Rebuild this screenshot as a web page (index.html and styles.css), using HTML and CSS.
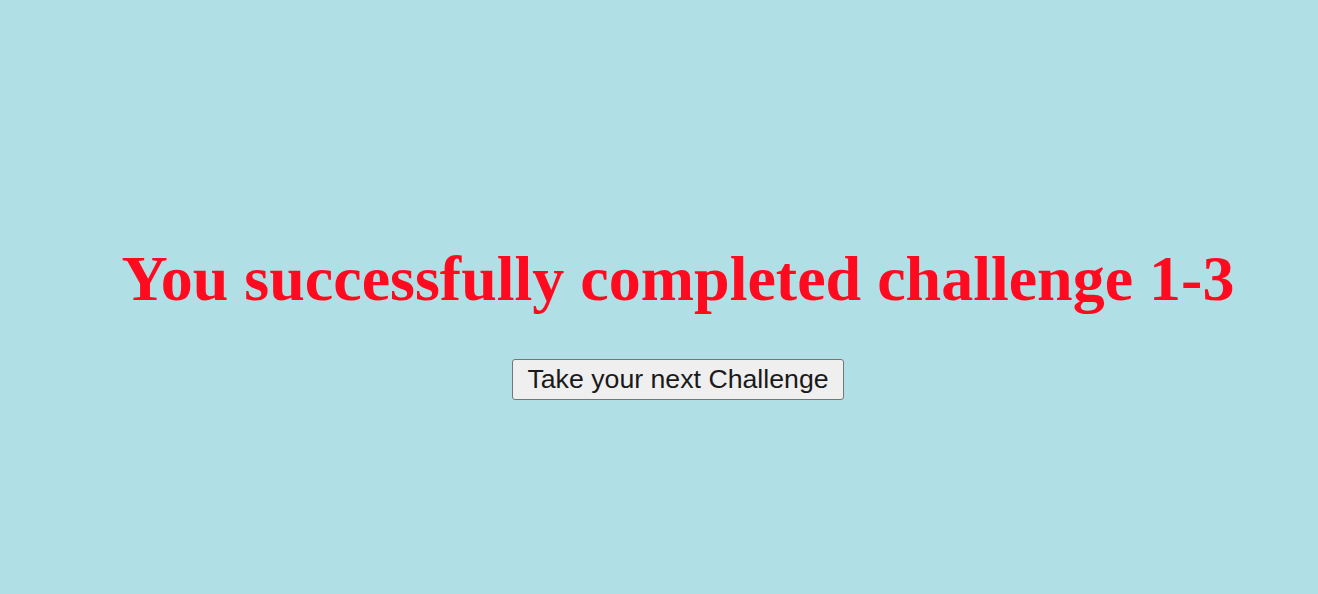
FILE: index.html
```html
<!DOCTYPE html>
<html>
<head>
<meta charset="utf-8">
<link rel="stylesheet" href="styles.css">
</head>
<body>
<main class="page">
  <h1 class="title">You successfully completed challenge 1-3</h1>
  <button class="next-btn">Take your next Challenge</button>
</main>
</body>
</html>
```
FILE: styles.css
```css
html, body {
  margin: 0;
  height: 100%;
  background: #b0e0e6;
}
.page {
  display: flex;
  flex-direction: column;
  align-items: center;
  padding-top: 236px;
  padding-left: 38px;
}
.title {
  margin: 0;
  font-family: "Liberation Serif", serif;
  font-weight: bold;
  font-size: 64px;
  line-height: 86px;
  color: #ff0a1e;
}
.next-btn {
  margin-top: 37px;
  font-family: "Liberation Sans", Arial, sans-serif;
  font-size: 26.7px;
  padding: 4px 14px;
  color: #1a1a1a;
  background: #efefef;
  border: 1px solid #767676;
  border-radius: 3px;
}
```
